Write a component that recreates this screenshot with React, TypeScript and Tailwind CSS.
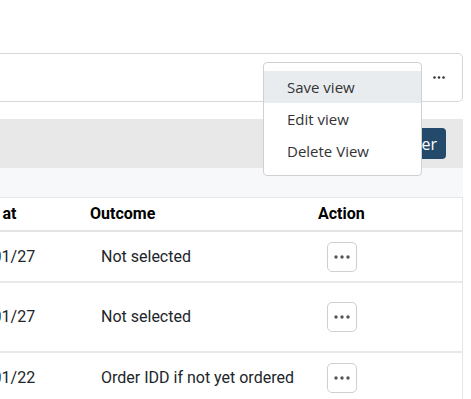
import React from "react";

const rows = [
  { date: "2024/01/27", outcome: "Not selected", h: "h-[51px]" },
  { date: "2024/01/27", outcome: "Not selected", h: "h-[70px]" },
  { date: "2024/01/22", outcome: "Order IDD if not yet ordered", h: "h-[51px]" },
];

function Dots({ className }: { className?: string }) {
  return (
    <svg viewBox="0 0 16 4" className={className} fill="currentColor">
      <circle cx="2" cy="2" r="1.7" />
      <circle cx="8" cy="2" r="1.7" />
      <circle cx="14" cy="2" r="1.7" />
    </svg>
  );
}

export default function App() {
  return (
    <div className="relative w-[471px] h-[399px] overflow-hidden bg-white pt-[53px] pr-[8px] font-['Roboto',sans-serif]">
      {/* view toolbar */}
      <div className="h-[49px] border border-l-0 border-[#d6d6d6] rounded-r-[5px] flex items-center justify-end pr-[17px]">
        <Dots className="w-[12px] h-[3px] text-[#333]" />
      </div>

      {/* filter bar */}
      <div className="mt-[17px] h-[49px] bg-[#e8e8e8] flex items-center justify-end pr-[17px]">
        <button className="h-[31px] rounded-[4px] bg-[#23496b] px-[9px] text-white text-[16px] font-['Open_Sans',sans-serif]">
          Filter
        </button>
      </div>
      <div className="h-[29px] bg-[#f7f8fa]" />

      {/* table */}
      <div className="-ml-[80px] border-t border-r border-[#e6e6e6]">
        <div className="flex h-[34px] items-center border-b-2 border-[#e4e4e4] text-[16px] font-bold text-black">
          <div className="w-[170px] pl-[22px] whitespace-nowrap">Created at</div>
          <div className="w-[228px]">Outcome</div>
          <div className="flex-1">Action</div>
        </div>
        {rows.map((r, i) => (
          <div
            key={i}
            className={`flex items-center border-b-2 border-[#e9e9e9] text-[16px] text-[#212529] ${r.h}`}
          >
            <div className="w-[170px] pl-[30px] whitespace-nowrap">{r.date}</div>
            <div className="w-[228px] pl-[11px] whitespace-nowrap">{r.outcome}</div>
            <div className="flex-1 pl-[9px]">
              <button className="w-[30px] h-[30px] rounded-[5px] border border-[#cfcfcf] bg-white flex items-center justify-center">
                <Dots className="w-[16px] h-[4px] text-[#555]" />
              </button>
            </div>
          </div>
        ))}
      </div>

      {/* view menu */}
      <div className="absolute left-[263px] top-[62px] w-[159px] rounded-[4px] border border-[#d0d0d0] bg-white py-[8px] font-['Open_Sans',sans-serif] text-[15px] text-[#333]">
        <div className="h-[32px] flex items-center pl-[23px] pr-[24px] bg-[#e9ecef]">Save view</div>
        <div className="h-[32px] flex items-center pl-[23px] pr-[24px]">Edit view</div>
        <div className="h-[32px] flex items-center pl-[23px] pr-[24px]">Delete View</div>
      </div>
    </div>
  );
}
